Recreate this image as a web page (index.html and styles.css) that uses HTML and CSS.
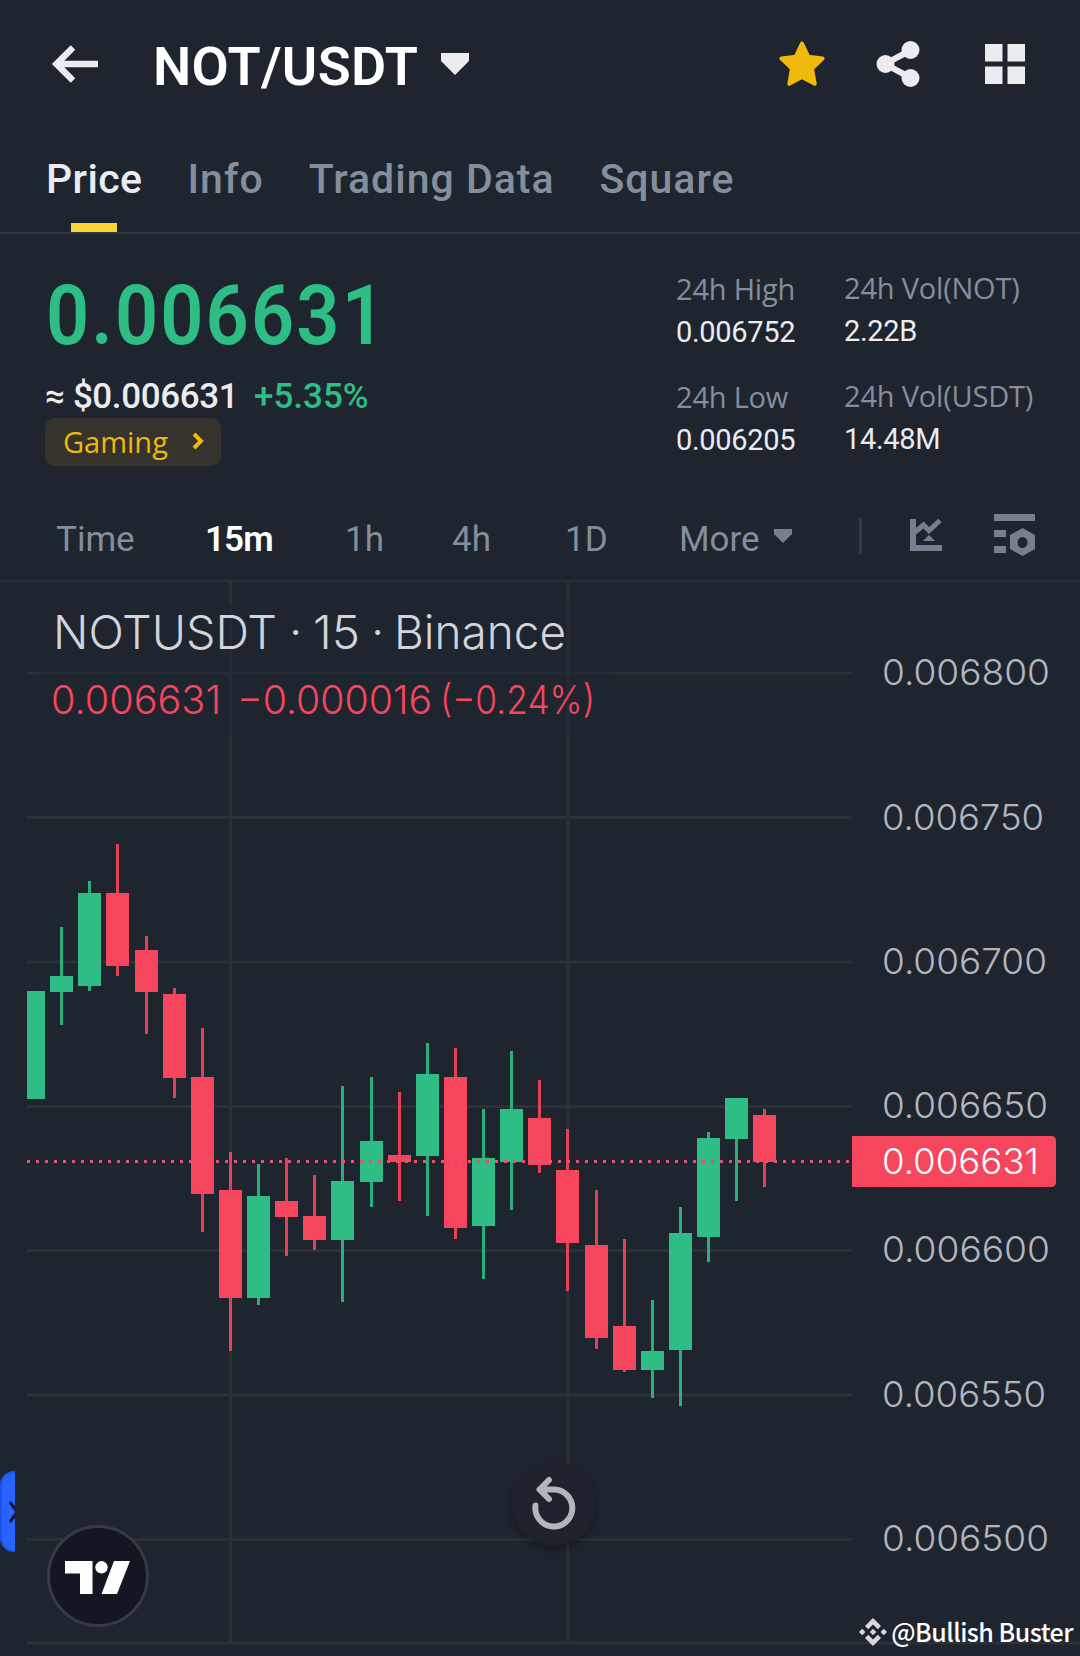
FILE: index.html
```
<!DOCTYPE html>
<html lang="en">
  <head>
    <meta charset="UTF-8" />
    <meta name="viewport" content="width=device-width, initial-scale=1.0" />
    <title>NOT/USDT</title>
    <link rel="stylesheet" href="styles.css">
  </head>
  <body>
    <header class="header">
      <svg class="header__back" width="48" height="40" viewBox="0 0 48 40">
        <path d="M47 20H7M22 3.500 5.500 20 22 36.500" />
      </svg>
      <h1 class="header__title">NOT/USDT</h1>
      <svg class="header__caret" width="28" height="22" viewBox="0 0 28 22">
        <path d="M0 0H28V8L14 22 0 8Z" />
      </svg>
      <div class="header__actions">
        <svg width="46" height="48" viewBox="0 0 46 48">
          <path class="star" d="M23 3.500 29.200 16.700 43.500 18.500 33 28.500 35.700 43.800 23 37 10.300 43.800 13 28.500 2.500 18.500 16.800 16.700Z" />
        </svg>
        <svg class="share" width="44" height="48" viewBox="0 0 44 48">
          <path d="M35 10 9 24 35 38" />
          <circle cx="9.500" cy="24" r="9" />
          <circle cx="34.500" cy="10" r="9" />
          <circle cx="34.500" cy="38" r="9" />
        </svg>
        <svg class="tiles" width="40" height="40" viewBox="0 0 40 40">
          <path d="M0 0H17.500V17.500H0ZM22.500 0H40V17.500H22.500ZM0 22.500H17.500V40H0ZM22.500 22.500H40V40H22.500Z" />
        </svg>
      </div>
    </header>

    <nav class="tabs">
      <a class="tabs__item active">Price</a>
      <a class="tabs__item">Info</a>
      <a class="tabs__item">Trading Data</a>
      <a class="tabs__item">Square</a>
    </nav>

    <section class="summary">
      <div class="summary__main">
        <div class="price">0.006631</div>
        <div class="fiat">
          <span class="fiat__value">≈ $0.006631</span>
          <span class="fiat__change">+5.35%</span>
        </div>
        <a class="tag">
          <span>Gaming</span>
          <svg width="12" height="18" viewBox="0 0 12 18">
            <path d="M2 2 9 9 2 16" />
          </svg>
        </a>
      </div>
      <dl class="stats">
        <div class="stats__item">
          <dt>24h High</dt>
          <dd>0.006752</dd>
        </div>
        <div class="stats__item stats__item--vol">
          <dt>24h Vol(NOT)</dt>
          <dd>2.22B</dd>
        </div>
        <div class="stats__item">
          <dt>24h Low</dt>
          <dd>0.006205</dd>
        </div>
        <div class="stats__item stats__item--vol">
          <dt>24h Vol(USDT)</dt>
          <dd>14.48M</dd>
        </div>
      </dl>
    </section>

    <nav class="intervals">
      <a>Time</a>
      <a class="active">15m</a>
      <a>1h</a>
      <a>4h</a>
      <a>1D</a>
      <a class="intervals__more">
        More
        <svg width="18" height="14" viewBox="0 0 18 14"><path d="M0 0H18V5L9 14 0 5Z" /></svg>
      </a>
      <i class="intervals__line"></i>
      <svg width="34" height="34" viewBox="0 0 34 34">
        <path d="M1 1H7V27H33V33H1Z" />
        <path class="stroke" d="M5 15 14.500 7 20 12.500 31 2.500" />
        <path d="M20 17 26 23H14Z" />
      </svg>
      <svg width="42" height="44" viewBox="0 0 42 44">
        <path d="M0 1H41V8H0ZM0 17H12V24H0ZM0 33H12V40H0Z" />
        <path fill-rule="evenodd" d="M28.500 15 41 22V36L28.500 43 16 36V22ZM28.500 24A5 5.500 0 1 0 28.500 35 5 5.500 0 1 0 28.500 24Z" />
      </svg>
    </nav>

    <main class="chart">
      <svg class="chart__canvas" width="1080" height="1074" viewBox="0 582 1080 1074">
        <g class="grid">
          <path d="M27 673H852M27 817.500H852M27 962H852M27 1106.500H852M27 1250.500H852M27 1395H852M27 1539.500H852M27 1643H1080" />
          <path d="M230.500 582V1643M568 582V1643" />
        </g>
        <rect class="legend-bg" x="40" y="603" width="574" height="132" />
        <g id="candles"></g>
        <path class="last-line" d="M27 1161.500H852" />

        <g class="symbol">
          <text x="53" y="649" textLength="224" lengthAdjust="spacingAndGlyphs">NOTUSDT</text>
          <text x="289" y="649">·</text>
          <text x="313" y="649" textLength="47" lengthAdjust="spacingAndGlyphs">15</text>
          <text x="371" y="649">·</text>
          <text x="394" y="649" textLength="172" lengthAdjust="spacingAndGlyphs">Binance</text>
        </g>
        <g class="change">
          <text x="51" y="714" textLength="170" lengthAdjust="spacingAndGlyphs">0.006631</text>
          <text x="237" y="714" textLength="195" lengthAdjust="spacingAndGlyphs">−0.000016</text>
          <text x="440" y="714" textLength="155" lengthAdjust="spacingAndGlyphs">(−0.24%)</text>
        </g>

        <path class="last-tag" d="M852 1136H1051Q1056 1136 1056 1141V1182Q1056 1187 1051 1187H852Z" />
        <g class="axis">
          <text x="882" y="685" textLength="168" lengthAdjust="spacingAndGlyphs">0.006800</text>
          <text x="882" y="830" textLength="162" lengthAdjust="spacingAndGlyphs">0.006750</text>
          <text x="882" y="974" textLength="165" lengthAdjust="spacingAndGlyphs">0.006700</text>
          <text x="882" y="1118" textLength="166" lengthAdjust="spacingAndGlyphs">0.006650</text>
          <text class="last" x="882" y="1174" textLength="157" lengthAdjust="spacingAndGlyphs">0.006631</text>
          <text x="882" y="1262" textLength="168" lengthAdjust="spacingAndGlyphs">0.006600</text>
          <text x="882" y="1407" textLength="164" lengthAdjust="spacingAndGlyphs">0.006550</text>
          <text x="882" y="1551" textLength="167" lengthAdjust="spacingAndGlyphs">0.006500</text>
        </g>
      </svg>

      <a class="drawer">
        <svg width="15" height="24" viewBox="0 0 15 24"><path d="M10 2 17 12 10 22" /></svg>
      </a>
      <a class="tv">
        <svg width="66" height="34" viewBox="0 0 66 34">
          <path d="M0 0H27.500V33H15V12.500H0ZM49 0H65L52 33H36.500Z" />
          <circle cx="36.500" cy="6.300" r="6.200" />
        </svg>
      </a>
      <a class="reset">
        <svg width="52" height="56" viewBox="0 0 52 56">
          <path d="M7.500 29.500A18.500 18.500 0 1 0 26 13.500H12M21 4 11.500 13.500 21 23" />
        </svg>
      </a>
      <div class="author">
        <svg width="28" height="28" viewBox="0 0 28 28">
          <path d="M14 0 22 8 18.800 11.200 14 6.400 9.200 11.200 6 8ZM14 28 6 20 9.200 16.800 14 21.600 18.800 16.800 22 20ZM3.200 10.800 6.400 14 3.200 17.200 0 14ZM24.800 10.800 28 14 24.800 17.200 21.600 14ZM14 10.800 17.200 14 14 17.200 10.800 14Z" />
        </svg>
        <span>@Bullish Buster</span>
      </div>
    </main>

    <script>
      // x, high, body top, body bottom, low, side
      const data = [
        [50, 927, 976, 992, 1025, 'up'],
        [78, 881, 893, 986, 991, 'up'],
        [106, 844, 893, 966, 976, 'down'],
        [135, 936, 950, 992, 1034, 'down'],
        [163, 988, 994, 1078, 1098, 'down'],
        [191, 1028, 1077, 1194, 1232, 'down'],
        [219, 1152, 1190, 1298, 1351, 'down'],
        [247, 1164, 1196, 1298, 1305, 'up'],
        [275, 1158, 1201, 1217, 1256, 'down'],
        [303, 1175, 1216, 1240, 1250, 'down'],
        [331, 1086, 1181, 1240, 1302, 'up'],
        [360, 1077, 1141, 1182, 1207, 'up'],
        [388, 1092, 1155, 1162, 1201, 'down'],
        [416, 1043, 1074, 1156, 1216, 'up'],
        [444, 1048, 1077, 1228, 1239, 'down'],
        [472, 1109, 1158, 1226, 1279, 'up'],
        [500, 1051, 1109, 1162, 1210, 'up'],
        [528, 1080, 1118, 1165, 1173, 'down'],
        [556, 1129, 1170, 1243, 1291, 'down'],
        [585, 1190, 1245, 1338, 1349, 'down'],
        [613, 1239, 1326, 1370, 1372, 'down'],
        [641, 1300, 1351, 1370, 1398, 'up'],
        [669, 1207, 1233, 1350, 1406, 'up'],
        [697, 1132, 1138, 1237, 1262, 'up'],
        [725, 1098, 1098, 1139, 1201, 'up'],
        [753, 1109, 1115, 1162, 1187, 'down'],
      ];
      const candles = document.getElementById('candles');

      function addRect(x, y, width, height, name) {
        const rect = document.createElementNS('http://www.w3.org/2000/svg', 'rect');
        rect.setAttribute('x', x);
        rect.setAttribute('y', y);
        rect.setAttribute('width', width);
        rect.setAttribute('height', height);
        rect.setAttribute('class', name);
        candles.appendChild(rect);
      }

      // first candle is cut by the left edge
      addRect(27, 991, 18, 108, 'up');
      data.forEach(([x, high, top, bottom, low, side]) => {
        addRect(x + 10, high, 3, low - high, side + ' wick');
        addRect(x, top, 23, bottom - top, side);
      });
    </script>
  </body>
</html>
```
FILE: styles.css
```
* {
  box-sizing: border-box;
}

body {
  margin: 0;
  width: 1080px;
  height: 1656px;
  overflow: hidden;
  background-color: #1e252f;
  color: #eaecef;
  font-family: Roboto, "Liberation Sans", sans-serif;
}

svg {
  display: block;
  flex: none;
}

.header {
  display: flex;
  align-items: center;
  height: 128px;
  padding: 0 55px 0 51px;
}

.header__back path {
  fill: none;
  stroke: #eaecef;
  stroke-width: 6.5;
}

.header__title {
  margin: 5px 0 0 54px;
  width: 288px;
  color: #fff;
  font-size: 54px;
  font-weight: 600;
  line-height: 1;
  letter-spacing: 0.3px;
  white-space: nowrap;
}

.header__caret,
.tiles,
.share circle {
  fill: #eaecef;
}

.header__actions {
  display: flex;
  align-items: center;
  margin-left: auto;
}

.star {
  fill: #f0b90b;
  stroke: #f0b90b;
  stroke-width: 4;
  stroke-linejoin: round;
}

.share {
  margin: 0 65px 0 51px;
}

.share path {
  fill: none;
  stroke: #eaecef;
  stroke-width: 6;
}

.tabs {
  display: flex;
  gap: 45px;
  height: 106px;
  padding: 0 46px;
  border-bottom: 2px solid #303740;
}

.tabs__item {
  position: relative;
  padding-top: 30px;
  color: #848e9c;
  font-size: 41px;
  font-weight: 500;
  line-height: 42px;
  letter-spacing: 1px;
  white-space: nowrap;
}

.tabs__item.active {
  color: #eaecef;
  letter-spacing: 0.4px;
}

.tabs__item.active::after {
  content: "";
  position: absolute;
  left: 50%;
  bottom: 0;
  width: 46px;
  height: 9px;
  margin-left: -23px;
  background-color: #fcd535;
}

.summary {
  display: flex;
  justify-content: space-between;
  height: 262px;
  padding: 40px 0 0 45px;
}

/* tall narrow digits */
.price {
  color: #2ebd85;
  font-size: 84px;
  font-weight: 600;
  line-height: 84px;
  letter-spacing: 2.4px;
  padding: 0 0 2px 1px;
  transform: scaleX(0.9);
  transform-origin: 0 0;
}

.fiat {
  display: flex;
  height: 58px;
  padding-top: 19px;
  font-size: 35px;
  font-weight: 500;
  line-height: 36px;
}

.fiat__value {
  width: 209px;
  letter-spacing: -0.4px;
  white-space: nowrap;
}

.fiat__change {
  color: #2ebd85;
}

.tag {
  display: flex;
  align-items: center;
  justify-content: space-between;
  width: 176px;
  height: 48px;
  padding: 0 17px 2px 18px;
  border-radius: 10px;
  background-color: #35332b;
  color: #f0b90b;
  font-family: "Open Sans", sans-serif;
  font-size: 29px;
}

.tag path {
  fill: none;
  stroke: #f0b90b;
  stroke-width: 4;
}

.stats {
  display: grid;
  grid-template-columns: 168px 236px;
  grid-auto-rows: 108px;
  margin: 0;
}

.stats__item {
  font-size: 29px;
  line-height: 30px;
  white-space: nowrap;
}

.stats__item--vol {
  margin-top: -1px;
}

.stats__item dt {
  margin-bottom: 13px;
  color: #848e9c;
  font-family: "Open Sans", sans-serif;
  letter-spacing: -0.2px;
}

.stats__item dd {
  margin: 0;
  letter-spacing: -0.3px;
}

.intervals {
  display: grid;
  grid-template-columns: 149px 140px 107px 113px 114px 180px 50px 85px 42px;
  align-items: center;
  height: 86px;
  padding-left: 56px;
  border-bottom: 2px solid #272e38;
  color: #848e9c;
  font-size: 35px;
}

.intervals a {
  padding-top: 2px;
}

.intervals .active {
  color: #fff;
  font-weight: 600;
  letter-spacing: -0.9px;
}

.intervals__more {
  display: flex;
  align-items: center;
  gap: 14px;
}

.intervals__line {
  width: 3px;
  height: 36px;
  margin-top: -4px;
  background-color: #343b45;
}

.intervals svg {
  margin-top: -6px;
  fill: #767e90;
}

.intervals .stroke {
  fill: none;
  stroke: #767e90;
  stroke-width: 5;
}

.chart {
  position: relative;
  height: 1074px;
}

.grid {
  fill: none;
  stroke: #2a3139;
  stroke-width: 3;
}

.legend-bg {
  fill: #1e252f;
  opacity: 0.5;
}

.up {
  fill: #2ebd85;
}

.down {
  fill: #f6465d;
}

.wick {
  opacity: 0.9;
}

.last-line {
  stroke: #e0566a;
  stroke-width: 3;
  stroke-dasharray: 3 6;
}

.chart text {
  font-family: Inter, "Liberation Sans", sans-serif;
  font-weight: 300;
}

.symbol {
  fill: #d1d4dc;
  font-size: 47px;
}

.change {
  fill: #f6465d;
  font-size: 39px;
}

.axis {
  fill: #b2b5be;
  font-size: 35px;
}

.last {
  fill: #fff;
}

.last-tag {
  fill: #f6465d;
}

/* controls floating over the chart */
.drawer {
  position: absolute;
  left: 0;
  top: 889px;
  display: flex;
  align-items: center;
  width: 15px;
  height: 81px;
  overflow: hidden;
  border: 2px solid #1e53e5;
  border-right: 0;
  border-radius: 14px 0 0 14px;
  background-color: #2962ff;
}

.drawer path {
  fill: none;
  stroke: #131722;
  stroke-width: 3;
}

.drawer svg {
  margin-left: -2px;
}

.tv {
  position: absolute;
  left: 47px;
  top: 943px;
  display: flex;
  align-items: center;
  justify-content: center;
  width: 102px;
  height: 102px;
  border: 3px solid #363a45;
  border-radius: 50%;
  background-color: #131722;
}

.tv svg {
  fill: #fff;
  margin-top: 4px;
}

.reset {
  position: absolute;
  left: 512px;
  top: 880px;
  display: flex;
  align-items: center;
  justify-content: center;
  width: 84px;
  height: 84px;
  border-radius: 50%;
  background-color: #1e222d;
  box-shadow: 0 4px 8px rgba(0, 0, 0, 0.3);
}

.reset path {
  fill: none;
  stroke: #b2b5be;
  stroke-width: 6;
  stroke-linecap: round;
  stroke-linejoin: round;
}

.author {
  position: absolute;
  right: 7px;
  bottom: 10px;
  display: flex;
  align-items: center;
  gap: 4px;
  color: #fff;
  font-family: "Noto Sans CJK SC", "Noto Sans", sans-serif;
  font-size: 25px;
  font-weight: 500;
  line-height: 28px;
  letter-spacing: -0.5px;
}

.author span {
  margin-top: -3px;
}

.author svg {
  fill: #d8d8d8;
}
```
